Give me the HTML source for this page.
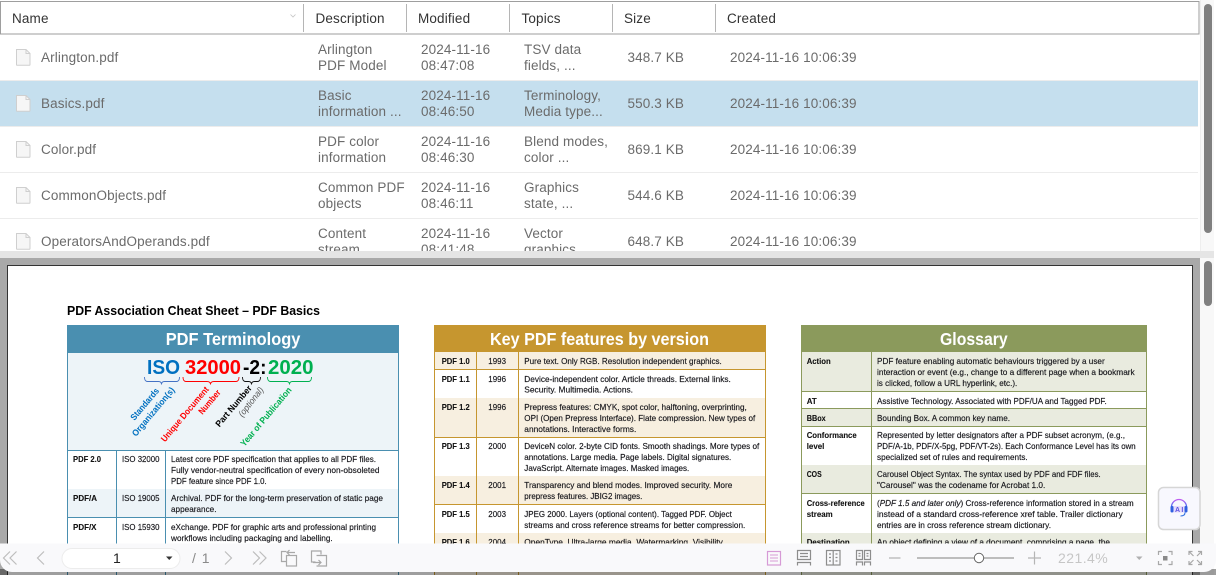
<!DOCTYPE html>
<html lang="en"><head><meta charset="utf-8"><title>PDF Basics</title>
<style>
html,body{margin:0;padding:0;width:1216px;height:575px;overflow:hidden;background:#fff}
svg{display:block}
text{font-family:"Liberation Sans",sans-serif;white-space:pre}
.h{font-size:13.5px;fill:#333;letter-spacing:.15px}
.r{font-size:13.5px;fill:#6b6b6b;letter-spacing:.12px}
.p{font-size:8.3px;fill:#15151a;stroke:#15151a;stroke-width:.15px}
.b{font-size:8.3px;font-weight:bold;fill:#111;stroke:#111;stroke-width:.1px}
.t{font-size:17.5px;font-weight:bold;fill:#fff}
.l{font-size:9px;font-weight:bold}
.iso{font-size:20.5px;font-weight:bold}
.ic{fill:none;stroke:#bdbdbd;stroke-width:1.2}
.id{fill:none;stroke:#8d8d8d;stroke-width:1.2}
</style></head><body>
<svg width="1216" height="575" viewBox="0 0 1216 575" xmlns="http://www.w3.org/2000/svg">
<defs>
<g id="f"><path d="M16.5 49.5h9.5l4 4v11a.8.8 0 0 1-.8.8H17.3a.8.8 0 0 1-.8-.8z" fill="#f6f6f6" stroke="#cfcfcf"/><path d="M26 49.5v4h4" fill="none" stroke="#cfcfcf"/></g>
<linearGradient id="hs" x1="0" y1="0" x2="0" y2="1"><stop offset="0" stop-color="#c15df0"/><stop offset="1" stop-color="#3b6ff0"/></linearGradient>
</defs>
<rect width="1216" height="575" fill="#fff"/>

<!-- file list rows -->
<rect x="0" y="81" width="1198" height="45" fill="#c5dfee"/>
<path d="M0 80.5h1198M0 126.5h1198M0 172.5h1198M0 218.5h1198" stroke="#ececec"/>
<use href="#f"/><use href="#f" y="46"/><use href="#f" y="92"/><use href="#f" y="138"/><use href="#f" y="184"/>

<text class="r" x="41" y="62">Arlington.pdf</text>
<text class="r" x="318" y="54">Arlington</text><text class="r" x="318" y="70">PDF Model</text>
<text class="r" x="421" y="54">2024-11-16</text><text class="r" x="421" y="70">08:47:08</text>
<text class="r" x="524" y="54">TSV data</text><text class="r" x="524" y="70">fields, ...</text>
<text class="r" x="627.5" y="62">348.7 KB</text><text class="r" x="730" y="62">2024-11-16 10:06:39</text>

<text class="r" x="41" y="108">Basics.pdf</text>
<text class="r" x="318" y="100">Basic</text><text class="r" x="318" y="116">information ...</text>
<text class="r" x="421" y="100">2024-11-16</text><text class="r" x="421" y="116">08:46:50</text>
<text class="r" x="524" y="100">Terminology,</text><text class="r" x="524" y="116">Media type...</text>
<text class="r" x="627.5" y="108">550.3 KB</text><text class="r" x="730" y="108">2024-11-16 10:06:39</text>

<text class="r" x="41" y="154">Color.pdf</text>
<text class="r" x="318" y="146">PDF color</text><text class="r" x="318" y="162">information</text>
<text class="r" x="421" y="146">2024-11-16</text><text class="r" x="421" y="162">08:46:30</text>
<text class="r" x="524" y="146">Blend modes,</text><text class="r" x="524" y="162">color ...</text>
<text class="r" x="627.5" y="154">869.1 KB</text><text class="r" x="730" y="154">2024-11-16 10:06:39</text>

<text class="r" x="41" y="200">CommonObjects.pdf</text>
<text class="r" x="318" y="192">Common PDF</text><text class="r" x="318" y="208">objects</text>
<text class="r" x="421" y="192">2024-11-16</text><text class="r" x="421" y="208">08:46:11</text>
<text class="r" x="524" y="192">Graphics</text><text class="r" x="524" y="208">state, ...</text>
<text class="r" x="627.5" y="200">544.6 KB</text><text class="r" x="730" y="200">2024-11-16 10:06:39</text>

<text class="r" x="41" y="246">OperatorsAndOperands.pdf</text>
<text class="r" x="318" y="238">Content</text><text class="r" x="318" y="254">stream</text>
<text class="r" x="421" y="238">2024-11-16</text><text class="r" x="421" y="254">08:41:48</text>
<text class="r" x="524" y="238">Vector</text><text class="r" x="524" y="254">graphics, ...</text>
<text class="r" x="627.5" y="246">648.7 KB</text><text class="r" x="730" y="246">2024-11-16 10:06:39</text>

<!-- header -->
<rect x=".5" y="1.5" width="1198.5" height="32.5" fill="#fff" stroke="#9e9e9e"/>
<path d="M303.5 4v28M406.5 4v28M509.5 4v28M612.5 4v28M715.5 4v28" stroke="#b5b5b5"/>
<path d="M290.5 14.5l2.5 2.5 2.5-2.5" fill="none" stroke="#c4c4c4" stroke-width=".8"/>
<text class="h" x="12" y="23">Name</text><text class="h" x="315.5" y="23">Description</text><text class="h" x="418" y="23">Modified</text><text class="h" x="521.5" y="23">Topics</text><text class="h" x="624" y="23">Size</text><text class="h" x="727" y="23">Created</text>

<!-- divider + pdf background -->
<rect x="0" y="251" width="1214" height="7" fill="#e5e5e5"/>
<rect x="0" y="258" width="1200" height="317" fill="#a9a9a9"/>
<rect x="7.5" y="265.5" width="1185" height="320" fill="#fff" stroke="#333"/>

<!-- scrollbars -->
<rect x="1200" y="0" width="14" height="251" fill="#f8f8f8"/>
<rect x="1200" y="258" width="14" height="317" fill="#f8f8f8"/>
<rect x="1200" y="0" width="1" height="251" fill="#eeeeee"/>
<rect x="1204" y="4" width="8" height="229" rx="4" fill="#808080"/>
<rect x="1204" y="261" width="8" height="45" rx="4" fill="#808080"/>

<!-- PDF title -->
<text x="67" y="315" font-size="12.5" font-weight="bold" fill="#000" textLength="253" lengthAdjust="spacingAndGlyphs">PDF Association Cheat Sheet – PDF Basics</text>

<!-- Left table -->
<rect x="67" y="353" width="332" height="97" fill="#edf4f8"/>
<rect x="67" y="489" width="332" height="28" fill="#edf4f8"/>
<rect x="67" y="325" width="332" height="28" fill="#4a8fb0"/>
<path d="M67.500 353V590M398.500 353V590M116.500 450V590M165.500 450V590M67 450.500h332M67 517.500h332" stroke="#4a8fb0" fill="none"/>
<text class="t" x="165.700" y="345" textLength="134.700" lengthAdjust="spacingAndGlyphs">PDF Terminology</text>
<text class="iso" x="147" y="374" fill="#0070c0" textLength="33" lengthAdjust="spacingAndGlyphs">ISO</text>
<text class="iso" x="185" y="374" fill="#ff0000" textLength="56" lengthAdjust="spacingAndGlyphs">32000</text>
<text class="iso" x="243" y="374" fill="#000" textLength="23.500" lengthAdjust="spacingAndGlyphs">-2:</text>
<text class="iso" x="268" y="374" fill="#00b050" textLength="45.500" lengthAdjust="spacingAndGlyphs">2020</text>
<g fill="none" stroke-width=".9">
<path d="M144.500 377c0 3 1 4.500 3 4.500h11c2 0 3 1 3 3 0-2 1-3 3-3h12c2 0 3-1.500 3-4.500" stroke="#4472c4"/>
<path d="M183 377c0 3 1 4.500 3 4.500h21c2 0 3.500 1 3.500 3 0-2 1.500-3 3.500-3h22c2 0 3-1.500 3-4.500" stroke="#ff0000"/>
<path d="M242.500 377c0 3 1 4.500 3 4.500h3c2 0 3 1 3 3 0-2 1-3 3-3h3c2 0 3-1.500 3-4.500" stroke="#111"/>
<path d="M267.500 377c0 3 1 4.500 3 4.500h16c2 0 3 1 3 3 0-2 1-3 3-3h16c2 0 3-1.500 3-4.500" stroke="#00b050"/>
</g>
<text class="l" fill="#0070c0" transform="translate(134.500 421) rotate(-50)" textLength="39" lengthAdjust="spacingAndGlyphs">Standards</text>
<text class="l" fill="#0070c0" transform="translate(136 437) rotate(-50)" textLength="61" lengthAdjust="spacingAndGlyphs">Organization(s)</text>
<text class="l" fill="#ff0000" transform="translate(165 442.500) rotate(-50)" textLength="69" lengthAdjust="spacingAndGlyphs">Unique Document</text>
<text class="l" fill="#ff0000" transform="translate(202.500 415) rotate(-50)" textLength="29" lengthAdjust="spacingAndGlyphs">Number</text>
<text class="l" fill="#000" transform="translate(219.500 427.500) rotate(-50)" textLength="51" lengthAdjust="spacingAndGlyphs">Part Number</text>
<text class="l" fill="#555" font-style="italic" style="font-weight:normal" transform="translate(242.500 417.500) rotate(-52)" textLength="35" lengthAdjust="spacingAndGlyphs">(optional)</text>
<text class="l" fill="#00b050" transform="translate(244.500 447) rotate(-50)" textLength="74" lengthAdjust="spacingAndGlyphs">Year of Publication</text>

<text class="b" x="73" y="462" textLength="28" lengthAdjust="spacingAndGlyphs">PDF 2.0</text>
<text class="p" x="122" y="462" textLength="37.500" lengthAdjust="spacingAndGlyphs">ISO 32000</text>
<text class="p" x="171" y="462" textLength="205" lengthAdjust="spacingAndGlyphs">Latest core PDF specification that applies to all PDF files.</text>
<text class="p" x="171" y="473" textLength="208.500" lengthAdjust="spacingAndGlyphs">Fully vendor-neutral specification of every non-obsoleted</text>
<text class="p" x="171" y="484" textLength="95.700" lengthAdjust="spacingAndGlyphs">PDF feature since PDF 1.0.</text>
<text class="b" x="73" y="501" textLength="24" lengthAdjust="spacingAndGlyphs">PDF/A</text>
<text class="p" x="122" y="501" textLength="37.500" lengthAdjust="spacingAndGlyphs">ISO 19005</text>
<text class="p" x="171" y="501" textLength="212" lengthAdjust="spacingAndGlyphs">Archival. PDF for the long-term preservation of static page</text>
<text class="p" x="171" y="512" textLength="45.500" lengthAdjust="spacingAndGlyphs">appearance.</text>
<text class="b" x="73" y="530" textLength="23.500" lengthAdjust="spacingAndGlyphs">PDF/X</text>
<text class="p" x="122" y="530" textLength="37.500" lengthAdjust="spacingAndGlyphs">ISO 15930</text>
<text class="p" x="171" y="530" textLength="205" lengthAdjust="spacingAndGlyphs">eXchange. PDF for graphic arts and professional printing</text>
<text class="p" x="171" y="541" textLength="161.700" lengthAdjust="spacingAndGlyphs">workflows including packaging and labelling.</text>

<!-- Middle table -->
<g fill="#f7efe0"><rect x="434" y="352" width="332" height="17"/><rect x="434" y="398" width="332" height="39"/><rect x="434" y="476" width="332" height="28"/><rect x="434" y="533" width="332" height="45"/></g>
<rect x="434" y="325" width="332" height="27" fill="#c6962f"/>
<path d="M434.500 352V590M765.500 352V590M476.500 352V590M518.500 352V590M434 369.500h332M434 437.500h332M434 504.500h332" stroke="#c6962f" fill="none"/>
<text class="t" x="490" y="345" textLength="219" lengthAdjust="spacingAndGlyphs">Key PDF features by version</text>
<g>
<text class="b" x="441.700" y="364" textLength="28" lengthAdjust="spacingAndGlyphs">PDF 1.0</text><text class="p" x="488.300" y="364" textLength="17.700" lengthAdjust="spacingAndGlyphs">1993</text>
<text class="p" x="524.300" y="364" textLength="197.500" lengthAdjust="spacingAndGlyphs">Pure text. Only RGB. Resolution independent graphics.</text>
<text class="b" x="441.700" y="382" textLength="28" lengthAdjust="spacingAndGlyphs">PDF 1.1</text><text class="p" x="488.300" y="382" textLength="17.700" lengthAdjust="spacingAndGlyphs">1996</text>
<text class="p" x="524.300" y="382" textLength="206.500" lengthAdjust="spacingAndGlyphs">Device-independent color. Article threads. External links.</text>
<text class="p" x="524.300" y="392.500" textLength="108.700" lengthAdjust="spacingAndGlyphs">Security. Multimedia. Actions.</text>
<text class="b" x="441.700" y="410" textLength="28" lengthAdjust="spacingAndGlyphs">PDF 1.2</text><text class="p" x="488.300" y="410" textLength="17.700" lengthAdjust="spacingAndGlyphs">1996</text>
<text class="p" x="524.300" y="410" textLength="222.500" lengthAdjust="spacingAndGlyphs">Prepress features: CMYK, spot color, halftoning, overprinting,</text>
<text class="p" x="524.300" y="421" textLength="231" lengthAdjust="spacingAndGlyphs">OPI (Open Prepress Interface). Flate compression. New types of</text>
<text class="p" x="524.300" y="432" textLength="112" lengthAdjust="spacingAndGlyphs">annotations. Interactive forms.</text>
<text class="b" x="441.700" y="449" textLength="28" lengthAdjust="spacingAndGlyphs">PDF 1.3</text><text class="p" x="488.300" y="449" textLength="17.700" lengthAdjust="spacingAndGlyphs">2000</text>
<text class="p" x="524.300" y="449" textLength="235" lengthAdjust="spacingAndGlyphs">DeviceN color. 2-byte CID fonts. Smooth shadings. More types of</text>
<text class="p" x="524.300" y="460" textLength="207" lengthAdjust="spacingAndGlyphs">annotations. Large media. Page labels. Digital signatures.</text>
<text class="p" x="524.300" y="471" textLength="165" lengthAdjust="spacingAndGlyphs">JavaScript. Alternate images. Masked images.</text>
<text class="b" x="441.700" y="488" textLength="28" lengthAdjust="spacingAndGlyphs">PDF 1.4</text><text class="p" x="488.300" y="488" textLength="17.700" lengthAdjust="spacingAndGlyphs">2001</text>
<text class="p" x="524.300" y="488" textLength="208" lengthAdjust="spacingAndGlyphs">Transparency and blend modes. Improved security. More</text>
<text class="p" x="524.300" y="499" textLength="118" lengthAdjust="spacingAndGlyphs">prepress features. JBIG2 images.</text>
<text class="b" x="441.700" y="517" textLength="28" lengthAdjust="spacingAndGlyphs">PDF 1.5</text><text class="p" x="488.300" y="517" textLength="17.700" lengthAdjust="spacingAndGlyphs">2003</text>
<text class="p" x="524.300" y="517" textLength="207.500" lengthAdjust="spacingAndGlyphs">JPEG 2000. Layers (optional content). Tagged PDF. Object</text>
<text class="p" x="524.300" y="528" textLength="221" lengthAdjust="spacingAndGlyphs">streams and cross reference streams for better compression.</text>
<text class="b" x="441.700" y="545" textLength="28" lengthAdjust="spacingAndGlyphs">PDF 1.6</text><text class="p" x="488.300" y="545" textLength="17.700" lengthAdjust="spacingAndGlyphs">2004</text>
<text class="p" x="524.300" y="545" textLength="198.500" lengthAdjust="spacingAndGlyphs">OpenType. Ultra-large media. Watermarking. Visibility</text>
</g>

<!-- Right table -->
<g fill="#e9ebdf"><rect x="801" y="352" width="346" height="39.500"/><rect x="801" y="408.500" width="346" height="17.500"/><rect x="801" y="465" width="346" height="28"/><rect x="801" y="533" width="346" height="45"/></g>
<rect x="801" y="325" width="346" height="27" fill="#8b9a5c"/>
<path d="M801.500 352V590M1146.500 352V590M871.500 352V590M801 391.500h346M801 408.500h346M801 426.500h346M801 493.500h346" stroke="#8b9a5c" fill="none"/>
<text class="t" x="940" y="345" textLength="67.700" lengthAdjust="spacingAndGlyphs">Glossary</text>
<g>
<text class="b" x="806.700" y="364" textLength="24" lengthAdjust="spacingAndGlyphs">Action</text>
<text class="p" x="877" y="364" textLength="227.700" lengthAdjust="spacingAndGlyphs">PDF feature enabling automatic behaviours triggered by a user</text>
<text class="p" x="877" y="375" textLength="257.700" lengthAdjust="spacingAndGlyphs">interaction or event (e.g., change to a different page when a bookmark</text>
<text class="p" x="877" y="386" textLength="140.300" lengthAdjust="spacingAndGlyphs">is clicked, follow a URL hyperlink, etc.).</text>
<text class="b" x="806.700" y="404" textLength="10" lengthAdjust="spacingAndGlyphs">AT</text>
<text class="p" x="877" y="404" textLength="229.700" lengthAdjust="spacingAndGlyphs">Assistive Technology. Associated with PDF/UA and Tagged PDF.</text>
<text class="b" x="806.700" y="421" textLength="19" lengthAdjust="spacingAndGlyphs">BBox</text>
<text class="p" x="877" y="421" textLength="133" lengthAdjust="spacingAndGlyphs">Bounding Box. A common key name.</text>
<text class="b" x="806.700" y="438" textLength="50" lengthAdjust="spacingAndGlyphs">Conformance</text>
<text class="b" x="806.700" y="449" textLength="17.700" lengthAdjust="spacingAndGlyphs">level</text>
<text class="p" x="877" y="438" textLength="248" lengthAdjust="spacingAndGlyphs">Represented by letter designators after a PDF subset acronym, (e.g.,</text>
<text class="p" x="877" y="449" textLength="258.700" lengthAdjust="spacingAndGlyphs">PDF/A-1b, PDF/X-5pg, PDF/VT-2s). Each Conformance Level has its own</text>
<text class="p" x="877" y="460" textLength="150.700" lengthAdjust="spacingAndGlyphs">specialized set of rules and requirements.</text>
<text class="b" x="806.700" y="477" textLength="15" lengthAdjust="spacingAndGlyphs">COS</text>
<text class="p" x="877" y="477" textLength="223.700" lengthAdjust="spacingAndGlyphs">Carousel Object Syntax. The syntax used by PDF and FDF files.</text>
<text class="p" x="877" y="488" textLength="168.300" lengthAdjust="spacingAndGlyphs">"Carousel" was the codename for Acrobat 1.0.</text>
<text class="b" x="806.700" y="506" textLength="58" lengthAdjust="spacingAndGlyphs">Cross-reference</text>
<text class="b" x="806.700" y="517" textLength="26" lengthAdjust="spacingAndGlyphs">stream</text>
<text class="p" x="877" y="506" textLength="256.700" lengthAdjust="spacingAndGlyphs">(<tspan font-style="italic">PDF 1.5 and later only</tspan>) Cross-reference information stored in a stream</text>
<text class="p" x="877" y="517" textLength="245.700" lengthAdjust="spacingAndGlyphs">instead of a standard cross-reference xref table. Trailer dictionary</text>
<text class="p" x="877" y="528" textLength="174" lengthAdjust="spacingAndGlyphs">entries are in cross reference stream dictionary.</text>
<text class="b" x="806.700" y="545" textLength="43" lengthAdjust="spacingAndGlyphs">Destination</text>
<text class="p" x="877" y="545" textLength="233" lengthAdjust="spacingAndGlyphs">An object defining a view of a document, comprising a page, the</text>
</g>

<!-- shadow strip below toolbar -->
<rect x="0" y="569" width="1216" height="6" fill="#000" opacity=".38"/>
<rect x="1214" y="0" width="2" height="569" fill="#fff"/>

<!-- toolbar -->
<path d="M0 543.500H1216V560a12 12 0 0 1-12 12H12a12 12 0 0 1-12-12z" fill="#f9f9fb"/>
<g class="ic">
<path d="M10 551.500l-6.500 6.500 6.500 6.500M16.500 551.500l-6.500 6.500 6.500 6.500"/>
<path d="M44 551.500l-6.500 6.500 6.500 6.500"/>
<path d="M225 551.500l6.500 6.500-6.500 6.500"/>
<path d="M253 551.500l6.500 6.500-6.500 6.500M259.500 551.500l6.500 6.500-6.500 6.500"/>
</g>
<rect x="62" y="548.500" width="118" height="20" rx="10" fill="#fff" stroke="#ececec"/>
<text x="113" y="563" font-size="14" fill="#222">1</text>
<path d="M166 556.500h6.500l-3.250 3.500z" fill="#333"/>
<text x="192" y="563" font-size="14" fill="#8a8a8a" letter-spacing="1">/ 1</text>
<g fill="none" stroke="#a8a8a8" stroke-width="1.200">
<path d="M286 561.500h-4.500v-10h5"/>
<rect x="286.500" y="555.500" width="10" height="10.500"/>
<path d="M295 552.500h-8m2.500-2.500l-2.500 2.500 2.500 2.500"/>
<path d="M321 554.500v-3.500h-9.500v11h4"/>
<path d="M316.500 555.500h10v10.500h-10"/>
<path d="M313 562.500h8m-2.500-2.500l2.500 2.500-2.500 2.500"/>
</g>
<rect x="767.500" y="551.500" width="13" height="13.500" fill="none" stroke="#d69ad6" stroke-width="1.200"/>
<path d="M770 555h8M770 558h8M770 561h8" stroke="#d69ad6"/>
<g class="id">
<path d="M797.500 550.500h13v9h-13zM797.500 565.500v-3h13v3M800 553.500h8M800 556.500h8"/>
<rect x="826.500" y="550.500" width="13.500" height="14.500"/><path d="M833.200 550.500v14.500M829 554h2M829 557.500h2M829 561h2M835.500 554h2M835.500 557.500h2M835.500 561h2"/>
<path d="M856.500 550.500h6v9h-6zM864.500 550.500h6v9h-6zM856.500 565.500v-3.500h6v3.500M864.500 565.500v-3.500h6v3.500M858.500 553.500h2M858.500 556h2M866.500 553.500h2M866.500 556h2"/>
</g>
<path d="M889 558h11.500M1028 558h13M1034.500 551.500v13" stroke="#b5b5b5" stroke-width="1.200"/>
<rect x="917" y="557" width="97" height="2" fill="#bdbdbd"/>
<circle cx="979" cy="558" r="4.700" fill="#fff" stroke="#666" stroke-width="1"/>
<text x="1058" y="563" font-size="14" fill="#c6c6c6" letter-spacing=".45">221.4%</text>
<path d="M1136 556.500h6.500l-3.250 3.500z" fill="#b0b0b0"/>
<g fill="none" stroke="#a8a8a8" stroke-width="1.200">
<path d="M1158.500 555v-3.500h3.500M1168.500 551.500h3.500v3.500M1158.500 561v3.500h3.500M1168.500 564.500h3.500V561"/>
<path d="M1189 555v-3.500h3.500M1189 551.500l4.500 4.500M1201.500 555v-3.500H1198M1201.500 551.500L1197 556M1189 561v3.500h3.500M1189 564.500l4.500-4.500M1201.500 561v3.500H1198M1201.500 564.500l-4.500-4.500"/>
</g>
<rect x="1163" y="556" width="4.500" height="4.500" fill="#8a8a8a"/>

<!-- AI button -->
<rect x="1158.500" y="487.500" width="41.500" height="42" rx="5" fill="#f8f8fe" stroke="#d6d6d6" stroke-width="1.500"/>
<rect x="1173" y="506" width="12" height="6.500" fill="#e6dcfb"/>
<path d="M1171.500 507a7.500 7.500 0 0 1 15 0" fill="none" stroke="url(#hs)" stroke-width="1.300"/>
<rect x="1170.500" y="506" width="3" height="6.500" rx="1.200" fill="#2f5fe0"/>
<rect x="1184.500" y="506" width="3" height="6.500" rx="1.200" fill="#2f5fe0"/>
<path d="M1185 512.500c0 2.500-2 3.500-4.500 3.500" fill="none" stroke="#2f6fe0" stroke-width="1.100"/>
<text x="1175" y="512" font-size="7" fill="#5f55e0" font-weight="bold" letter-spacing="1.300">AI</text>
</svg>
</body></html>
